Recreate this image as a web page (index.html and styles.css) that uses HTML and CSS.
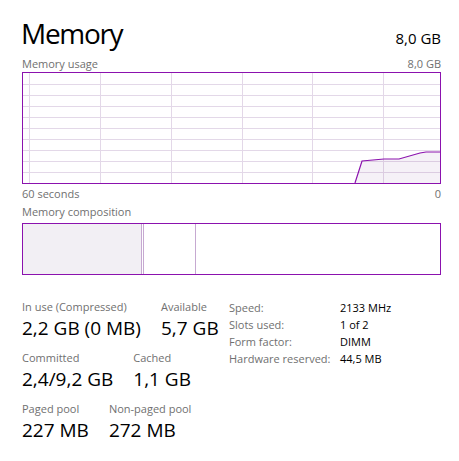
FILE: index.html
```html
<!DOCTYPE html>
<html>
<head>
<meta charset="utf-8">
<link rel="stylesheet" href="styles.css">
</head>
<body>
<div class="page">
  <div class="header">
    <div class="title">Memory</div>
    <div class="total">8,0 GB</div>
  </div>
  <div class="caption-row usage-cap">
    <span>Memory usage</span>
    <span>8,0 GB</span>
  </div>
  <div class="chart">
    <svg width="417" height="110" viewBox="0 0 417 110">
      <g stroke="#e3d8e8" stroke-width="1" shape-rendering="crispEdges">
        <line x1="0" y1="11.5" x2="417" y2="11.5"/>
        <line x1="0" y1="22.5" x2="417" y2="22.5"/>
        <line x1="0" y1="33.5" x2="417" y2="33.5"/>
        <line x1="0" y1="44.5" x2="417" y2="44.5"/>
        <line x1="0" y1="55.5" x2="417" y2="55.5"/>
        <line x1="0" y1="66.5" x2="417" y2="66.5"/>
        <line x1="0" y1="77.5" x2="417" y2="77.5"/>
        <line x1="0" y1="88.5" x2="417" y2="88.5"/>
        <line x1="0" y1="99.5" x2="417" y2="99.5"/>
        <line x1="6.5" y1="0" x2="6.5" y2="110"/>
        <line x1="77.5" y1="0" x2="77.5" y2="110"/>
        <line x1="148.5" y1="0" x2="148.5" y2="110"/>
        <line x1="219.5" y1="0" x2="219.5" y2="110"/>
        <line x1="289.5" y1="0" x2="289.5" y2="110"/>
        <line x1="360.5" y1="0" x2="360.5" y2="110"/>
      </g>
      <polygon points="332,110 339,88 361,86 376,86 397,80 403,79 417,79 417,110" fill="rgba(120,60,140,0.07)"/>
      <polyline points="332,110 339,88 361,86 376,86 397,80 403,79 417,79" fill="none" stroke="#8b12ae" stroke-width="1.2"/>
    </svg>
  </div>
  <div class="caption-row axis">
    <span>60 seconds</span>
    <span>0</span>
  </div>
  <div class="caption-row comp-cap">
    <span>Memory composition</span>
  </div>
  <div class="composition">
    <div class="seg inuse"></div>
    <div class="seg modified"></div>
    <div class="seg standby"></div>
    <div class="seg free"></div>
  </div>
  <div class="details">
    <div class="stats">
      <div class="stat-row">
        <div class="stat"><div class="label">In use (Compressed)</div><div class="value">2,2 GB (0 MB)</div></div>
        <div class="stat"><div class="label">Available</div><div class="value">5,7 GB</div></div>
      </div>
      <div class="stat-row">
        <div class="stat"><div class="label">Committed</div><div class="value">2,4/9,2 GB</div></div>
        <div class="stat"><div class="label">Cached</div><div class="value">1,1 GB</div></div>
      </div>
      <div class="stat-row">
        <div class="stat"><div class="label">Paged pool</div><div class="value">227 MB</div></div>
        <div class="stat"><div class="label">Non-paged pool</div><div class="value">272 MB</div></div>
      </div>
    </div>
    <div class="props">
      <div class="pk">Speed:</div><div class="pv">2133 MHz</div>
      <div class="pk">Slots used:</div><div class="pv">1 of 2</div>
      <div class="pk">Form factor:</div><div class="pv">DIMM</div>
      <div class="pk">Hardware reserved:</div><div class="pv">44,5 MB</div>
    </div>
  </div>
</div>
</body>
</html>
```
FILE: styles.css
```css
html, body {
  margin: 0;
  padding: 0;
  background: #ffffff;
}
body {
  font-family: "Open Sans", "Noto Sans", sans-serif;
  color: #000;
}
.page {
  width: 419px;
  padding: 14px 0 0 22px;
}
.header {
  display: flex;
  justify-content: space-between;
  align-items: baseline;
  height: 42px;
}
.title {
  font-size: 28px;
  line-height: 38px;
  letter-spacing: -1.3px;
  margin-left: -1px;
  color: #000;
}
.total {
  font-size: 15px;
  line-height: 20px;
  color: #000;
}
.caption-row {
  display: flex;
  justify-content: space-between;
  font-size: 11px;
  color: #707070;
  line-height: 15px;
}
.usage-cap {
  height: 16px;
}
.chart {
  border: 1px solid #8b12ae;
  height: 110px;
  background: #fff;
}
.chart svg {
  display: block;
}
.axis {
  margin-top: 2px;
}
.comp-cap {
  margin-top: 3px;
  height: 19px;
}
.composition {
  border: 1px solid #8b12ae;
  height: 50px;
  display: flex;
}
.seg {
  height: 100%;
}
.inuse {
  width: 118px;
  background: #f2eff4;
  border-right: 1px solid #c6a9d1;
}
.modified {
  width: 1px;
  border-right: 1px solid #c6a9d1;
}
.standby {
  width: 51px;
  border-right: 1px solid #c6a9d1;
}
.free {
  flex: 1;
}
.details {
  display: flex;
  margin-top: 24px;
}
.stats {
  width: 207px;
  display: flex;
  flex-direction: column;
}
.stat-row {
  display: flex;
  gap: 20px;
  height: 51px;
}
.label {
  font-size: 11px;
  line-height: 16px;
  color: #707070;
  white-space: nowrap;
}
.value {
  font-size: 19px;
  line-height: 26px;
  white-space: nowrap;
}
.props {
  display: grid;
  grid-template-columns: 111px auto;
  grid-auto-rows: 17px;
  font-size: 11px;
  line-height: 17px;
  align-content: start;
}
.pk {
  color: #707070;
}
.pv {
  color: #000;
}
```
